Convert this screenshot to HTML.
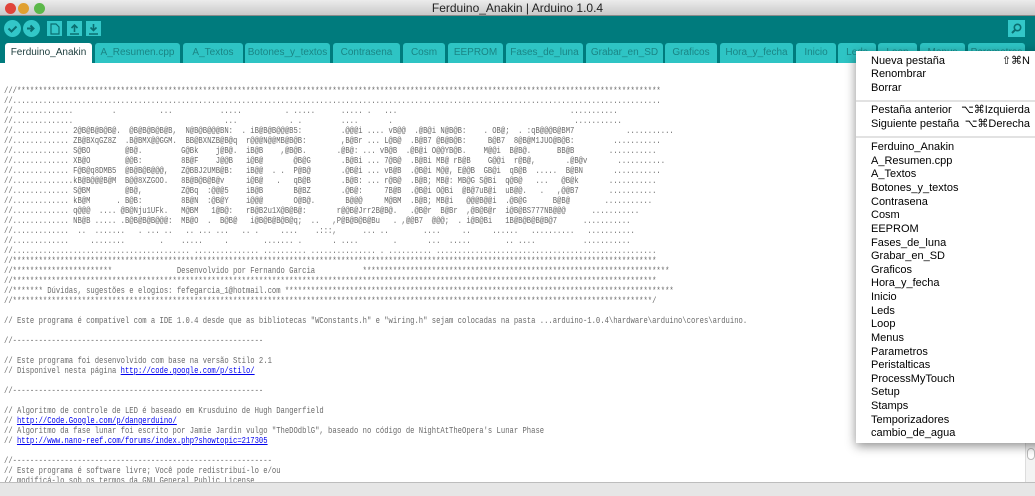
<!DOCTYPE html>
<html><head><meta charset="utf-8"><style>
*{margin:0;padding:0;box-sizing:border-box}
body{width:1035px;height:496px;overflow:hidden;background:#fff;position:relative;font-family:"Liberation Sans",sans-serif}
#title{position:absolute;left:0;top:0;width:1035px;height:16px;background:linear-gradient(#ececec,#c9c9c9);border-bottom:1px solid #8a8a8a;text-align:center;font-size:12px;line-height:16px;color:#222}
.tl{position:absolute;top:3px;width:11px;height:11px;border-radius:50%}
#tool{position:absolute;left:0;top:16px;width:1035px;height:27px;background:#007b7d}
#tabs{position:absolute;left:0;top:40px;width:1035px;height:23px;background:#007b7d}
.tab{position:absolute;top:3px;height:20px;background:#2ec4c4;color:#1a8585;font-size:10px;line-height:20px;text-align:center;border-radius:3px 3px 0 0;white-space:nowrap;overflow:hidden}
.tab.sel{background:#fff;color:#1c3c3c}
.cb{position:absolute;top:20px;width:17px;height:17px;border-radius:50%;background:#33c7c8}
.sb{position:absolute;top:21px;width:15px;height:15px;background:#33c7c8}
#code{position:absolute;left:4px;top:86px;font-family:"Liberation Mono",monospace;font-size:9px;line-height:10px;color:#6a6a6a;white-space:pre;transform:scaleX(0.8);transform-origin:0 0}
#code a{color:#0000ee;text-decoration:underline}
#status{position:absolute;left:0;top:482px;width:1035px;height:14px;background:#e6e6e6;border-top:1px solid #bdbdbd}
#scroll{position:absolute;left:1025px;top:63px;width:10px;height:419px;background:#f3f3f3;border-left:1px solid #ddd}
#menu{position:absolute;left:856px;top:51px;width:190px;height:392px;background:#fff;box-shadow:0 3px 10px rgba(0,0,0,.45);font-size:11px;color:#000}
.mi{position:absolute;left:15px;height:14px;line-height:14px;white-space:nowrap}
.sc{position:absolute;right:16px;height:14px;line-height:14px;white-space:nowrap}
.sep{position:absolute;left:0;width:190px;height:2px;background:#e2e2e2}
</style></head><body>
<div id="title">Ferduino_Anakin | Arduino 1.0.4
<div class="tl" style="left:5px;background:#e0443a"></div>
<div class="tl" style="left:18px;background:#e0a030"></div>
<div class="tl" style="left:34px;background:#5cb84a"></div>
</div>
<div id="tool"></div>
<div class="cb" style="left:4px"></div><div class="cb" style="left:23px"></div>
<div class="sb" style="left:47px"></div><div class="sb" style="left:67px"></div><div class="sb" style="left:86px"></div>
<svg style="position:absolute;left:0;top:16px" width="110" height="27">
<path d="M8.5 12.5l3 3 5-5" stroke="#0a6e70" stroke-width="2" fill="none"/>
<path d="M27 12.5h6M30.5 9.5l3 3-3 3" stroke="#0a6e70" stroke-width="2" fill="none"/>
<path d="M51 8h5l3 3v7h-8z" stroke="#0a6e70" stroke-width="1.2" fill="none"/>
<path d="M74.5 16v-6M71.5 12l3-3 3 3M70 18h9" stroke="#0a6e70" stroke-width="1.6" fill="none"/>
<path d="M93.5 8v6M90.5 11.5l3 3 3-3M89 18h9" stroke="#0a6e70" stroke-width="1.6" fill="none"/>
</svg>
<div style="position:absolute;left:1008px;top:20px;width:17px;height:17px;background:#33c7c8"></div>
<svg style="position:absolute;left:1008px;top:20px" width="17" height="17"><circle cx="9.5" cy="7.5" r="3.2" stroke="#0a6e70" stroke-width="1.6" fill="none"/><path d="M7 10l-3 3" stroke="#0a6e70" stroke-width="2"/></svg>
<div id="tabs">
<div class="tab sel" style="left:5px;width:87px">Ferduino_Anakin</div>
<div class="tab" style="left:95px;width:85px">A_Resumen.cpp</div>
<div class="tab" style="left:183px;width:60px">A_Textos</div>
<div class="tab" style="left:245px;width:85px">Botones_y_textos</div>
<div class="tab" style="left:333px;width:67px">Contrasena</div>
<div class="tab" style="left:403px;width:42px">Cosm</div>
<div class="tab" style="left:448px;width:55px">EEPROM</div>
<div class="tab" style="left:506px;width:77px">Fases_de_luna</div>
<div class="tab" style="left:586px;width:77px">Grabar_en_SD</div>
<div class="tab" style="left:665px;width:52px">Graficos</div>
<div class="tab" style="left:720px;width:73px">Hora_y_fecha</div>
<div class="tab" style="left:796px;width:40px">Inicio</div>
<div class="tab" style="left:838px;width:38px">Leds</div>
<div class="tab" style="left:878px;width:39px">Loop</div>
<div class="tab" style="left:920px;width:45px">Menus</div>
<div class="tab" style="left:968px;width:57px">Parametros</div>
</div>
<div id="code">///*****************************************************************************************************************************************************
//......................................................................................................................................................
//..............         .          ...           .....          . .....      ..... .   ...                                        ...........
//..............                                   ...            . .         ....       .                                          ...........
//............. 2@B@B@B@B@.  @B@B@B@B@B,  N@B@B@@@BN:  . iB@B@B@@@B5:         .@@@i .... vB@@  .@B@i N@B@B:    . OB@;  . :qB@@@B@BM7            ...........
//............. ZB@BXqGZ8Z  .B@BMX@@GGM.  BB@BXNZB@B@q  r@@@N@@MB@B@B:        ,B@Br ... L@B@  .B@B7 @B@B@B:     B@B7  8@B@M1JUO@B@B:         ...........
//............. S@BO        @B@.         G@Bk    j@B@.  iB@B    ,@B@B.       .@B@: ... vB@B  .@B@i O@@YB@B.    M@@i  B@B@.      BB@B        ...........
//............. XB@O        @@B:         8B@F    J@@B   i@B@       @B@G       .B@Bi ... 7@B@  .B@Bi MB@ rB@B    G@@i  r@B@,       .@B@v       ...........
//............. F@B@q8DMB5  @B@B@B@@@,   Z@BBJ2UMB@B:   iB@@  . .  P@B@       .@B@i ... vB@B  .@B@i M@@, E@@B  GB@i  qB@B  .....  B@BN       ...........
//..............kB@B@@@B@M  B@@8XZGOO.   8B@B@B@B@v     i@B@   .   qB@B       .B@B: ... r@B@  .B@B; MB@: MB@G S@Bi  q@B@   ...   @B@k       ...........
//............. S@BM        @B@,         Z@Bq  :@@@5    iB@B       B@BZ       .@B@:     7B@B  .@B@i O@Bi  @B@7uB@i  uB@@.   .   ,@@B7       ...........
//............. kB@M      . B@B:         8B@N  :@B@Y    i@@@       O@B@.       B@@@     M@BM  .B@B; MB@i   @@@B@@i  .@B@G      B@B@        ...........
//............. q@@@  .... @B@Nju1UFk.   M@BM   1@B@:   rB@B2u1X@B@B@:       r@@B@Jrr2B@B@.   .@B@r  B@Br  ,@B@B@r  i@B@BS777NB@@@      ...........
//............. NB@B ..... .B@B@B@B@@@:  MB@O  .  B@B@   i@B@B@B@B@q;  ..   ,P@B@B@B@Bu   . ,@@B7  @@@;  . i@B@Bi   1B@B@B@B@B@7      ...........
//.............  ..  .......   . ... ..   .. ... ...   .. .     ....    .:::,      ... ..        ....     ..     ......   ..........   ...........
//.............     ........        .    .....     .        ....... .       . ....        .       ...  .....        .. ....           ...........
//......................................... ............... .......... ............... . .......... ...................................................
//*****************************************************************************************************************************************************
//***********************               Desenvolvido por Fernando Garcia           ***********************************************************************
//*****************************************************************************************************************************************************
//******* Dúvidas, sugestões e elogios: fefegarcia_1@hotmail.com ******************************************************************************************
//****************************************************************************************************************************************************/

// Este programa é compatível com a IDE 1.0.4 desde que as bibliotecas "WConstants.h" e "wiring.h" sejam colocadas na pasta ...arduino-1.0.4\hardware\arduino\cores\arduino.

//----------------------------------------------------------

// Este programa foi desenvolvido com base na versão Stilo 2.1
// Disponível nesta página <a>http://code.google.com/p/stilo/</a>

//----------------------------------------------------------

// Algoritmo de controle de LED é baseado em Krusduino de Hugh Dangerfield
// <a>http://Code.Google.com/p/dangerduino/</a>
// Algoritmo da fase lunar foi escrito por Jamie Jardin vulgo "TheDOdblG", baseado no código de NightAtTheOpera's Lunar Phase
// <a>http://www.nano-reef.com/forums/index.php?showtopic=217305</a>

//------------------------------------------------------------
// Este programa é software livre; Você pode redistribuí-lo e/ou
// modificá-lo sob os termos da GNU General Public License
</div>
<div id="scroll"><div style="position:absolute;left:1px;top:385px;width:8px;height:12px;border:1px solid #bbb;border-radius:4px;background:#fff"></div></div>
<div id="status"></div>
<div id="menu">
<div class="mi" style="top:3px">Nueva pestaña</div><div class="sc" style="top:3px">⇧⌘N</div>
<div class="mi" style="top:16px">Renombrar</div>
<div class="mi" style="top:30px">Borrar</div>
<div class="sep" style="top:49px"></div>
<div class="mi" style="top:52px">Pestaña anterior</div><div class="sc" style="top:52px">⌥⌘Izquierda</div>
<div class="mi" style="top:66px">Siguiente pestaña</div><div class="sc" style="top:66px">⌥⌘Derecha</div>
<div class="sep" style="top:85px"></div>
<div class="mi" style="top:89px">Ferduino_Anakin</div>
<div class="mi" style="top:103px">A_Resumen.cpp</div>
<div class="mi" style="top:116px">A_Textos</div>
<div class="mi" style="top:130px">Botones_y_textos</div>
<div class="mi" style="top:144px">Contrasena</div>
<div class="mi" style="top:157px">Cosm</div>
<div class="mi" style="top:171px">EEPROM</div>
<div class="mi" style="top:185px">Fases_de_luna</div>
<div class="mi" style="top:198px">Grabar_en_SD</div>
<div class="mi" style="top:212px">Graficos</div>
<div class="mi" style="top:225px">Hora_y_fecha</div>
<div class="mi" style="top:239px">Inicio</div>
<div class="mi" style="top:253px">Leds</div>
<div class="mi" style="top:266px">Loop</div>
<div class="mi" style="top:280px">Menus</div>
<div class="mi" style="top:294px">Parametros</div>
<div class="mi" style="top:307px">Peristalticas</div>
<div class="mi" style="top:321px">ProcessMyTouch</div>
<div class="mi" style="top:334px">Setup</div>
<div class="mi" style="top:348px">Stamps</div>
<div class="mi" style="top:362px">Temporizadores</div>
<div class="mi" style="top:375px">cambio_de_agua</div>
</div>
</body></html>
